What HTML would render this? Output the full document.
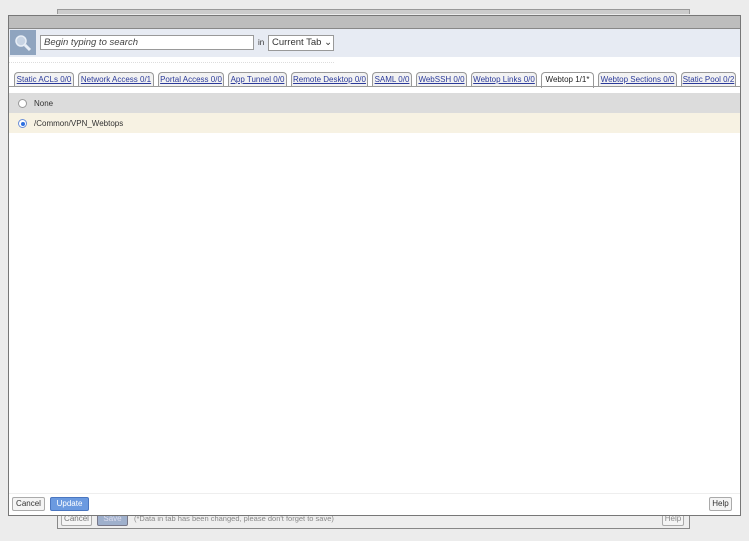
<!DOCTYPE html><html><head><style>
*{box-sizing:border-box;margin:0;padding:0}
body{width:749px;height:541px;background:#ececec;position:relative;overflow:hidden;font-family:"Liberation Sans",sans-serif;font-size:8px;color:#333}
.a{position:absolute}
.tab{position:absolute;top:72px;height:15px;border:1px solid #999;border-bottom:none;border-radius:4px 4px 0 0;background:#f2f2f2;color:#2b3a9a;text-decoration:underline;font-size:8px;line-height:14px;text-align:center;white-space:nowrap;overflow:hidden}
.btn{position:absolute;height:14px;border:1px solid #aaa;border-radius:2px;background:#f4f4f4;font-size:8px;line-height:12px;text-align:center;color:#333}
</style></head><body>
<!-- back window -->
<div class="a" style="left:57px;top:9px;width:633px;height:5px;border:1px solid #999;border-bottom:none;background:#ccc"></div>
<div class="a" style="left:57px;top:505px;width:633px;height:24px;border:1px solid #888;border-top:none;background:#eee"></div>
<div class="btn" style="left:61px;top:512px;width:31px;color:#777">Cancel</div>
<div class="btn" style="left:97px;top:512px;width:31px;background:#9fb0cc;color:#dde;border-color:#778">Save</div>
<div class="a" style="left:134px;top:514px;color:#888;font-size:7.5px">(*Data in tab has been changed, please don't forget to save)</div>
<div class="btn" style="left:662px;top:512px;width:22px;color:#888">Help</div>
<!-- front -->
<div class="a" style="left:8px;top:15px;width:733px;height:501px;border:1px solid #777;background:#fff"></div>
<div class="a" style="left:9px;top:16px;width:731px;height:13px;background:#bdbdbd;border-bottom:1px solid #888"></div>
<div class="a" style="left:9px;top:29px;width:731px;height:28px;background:#e7ebf3"></div>
<div class="a" style="left:10px;top:30px;width:26px;height:25px;background:#8fa4bf">
<svg width="26" height="25"><circle cx="11" cy="11" r="5" fill="#c8d4e4" stroke="#e8eef6" stroke-width="1.5"/><line x1="15" y1="15" x2="20" y2="20" stroke="#e8eef6" stroke-width="3"/></svg></div>
<div class="a" style="left:40px;top:35px;width:214px;height:15px;border:1px solid #999;background:#fff;font-style:italic;font-size:9.5px;line-height:13px;padding-left:3px;color:#444">Begin typing to search</div>
<div class="a" style="left:258px;top:38px;font-size:8px">in</div>
<div class="a" style="left:268px;top:35px;width:66px;height:16px;border:1px solid #999;background:#fff;font-size:9.5px;line-height:14px;padding-left:3px;color:#333">Current Tab ⌄</div>
<div class="a" style="left:9px;top:62px;width:325px;border-top:1px dotted #ddd"></div>
<div class="tab" style="left:14px;width:60px">Static ACLs 0/0</div>
<div class="tab" style="left:78px;width:76px">Network Access 0/1</div>
<div class="tab" style="left:158px;width:66px">Portal Access 0/0</div>
<div class="tab" style="left:228px;width:59px">App Tunnel 0/0</div>
<div class="tab" style="left:291px;width:77px">Remote Desktop 0/0</div>
<div class="tab" style="left:372px;width:40px">SAML 0/0</div>
<div class="tab" style="left:416px;width:51px">WebSSH 0/0</div>
<div class="tab" style="left:471px;width:66px">Webtop Links 0/0</div>
<div class="tab" style="left:541px;width:53px;background:#fff;color:#222;text-decoration:none;height:16px">Webtop 1/1*</div>
<div class="tab" style="left:598px;width:79px">Webtop Sections 0/0</div>
<div class="tab" style="left:681px;width:55px">Static Pool 0/2</div>
<div class="a" style="left:9px;top:86px;width:731px;border-top:1px solid #999"></div>
<div class="a" style="left:9px;top:93px;width:731px;height:20px;background:#dcdcdc"></div>
<div class="a" style="left:18px;top:99px;width:9px;height:9px;border:1px solid #999;border-radius:50%;background:#fff"></div>
<div class="a" style="left:34px;top:99px;font-size:8px">None</div>
<div class="a" style="left:9px;top:113px;width:731px;height:20px;background:#f7f2e3"></div>
<div class="a" style="left:18px;top:119px;width:9px;height:9px;border:1px solid #6c8fd8;border-radius:50%;background:#fff"><div style="margin:1.5px;width:4px;height:4px;border-radius:50%;background:#2d6fe0"></div></div>
<div class="a" style="left:34px;top:119px;font-size:8px">/Common/VPN_Webtops</div>
<div class="a" style="left:9px;top:493px;width:731px;border-top:1px solid #eee"></div>
<div class="btn" style="left:12px;top:497px;width:33px">Cancel</div>
<div class="btn" style="left:50px;top:497px;width:39px;background:#6b9ae0;border-color:#4a76c0;color:#fff">Update</div>
<div class="btn" style="left:709px;top:497px;width:23px">Help</div>
</body></html>
